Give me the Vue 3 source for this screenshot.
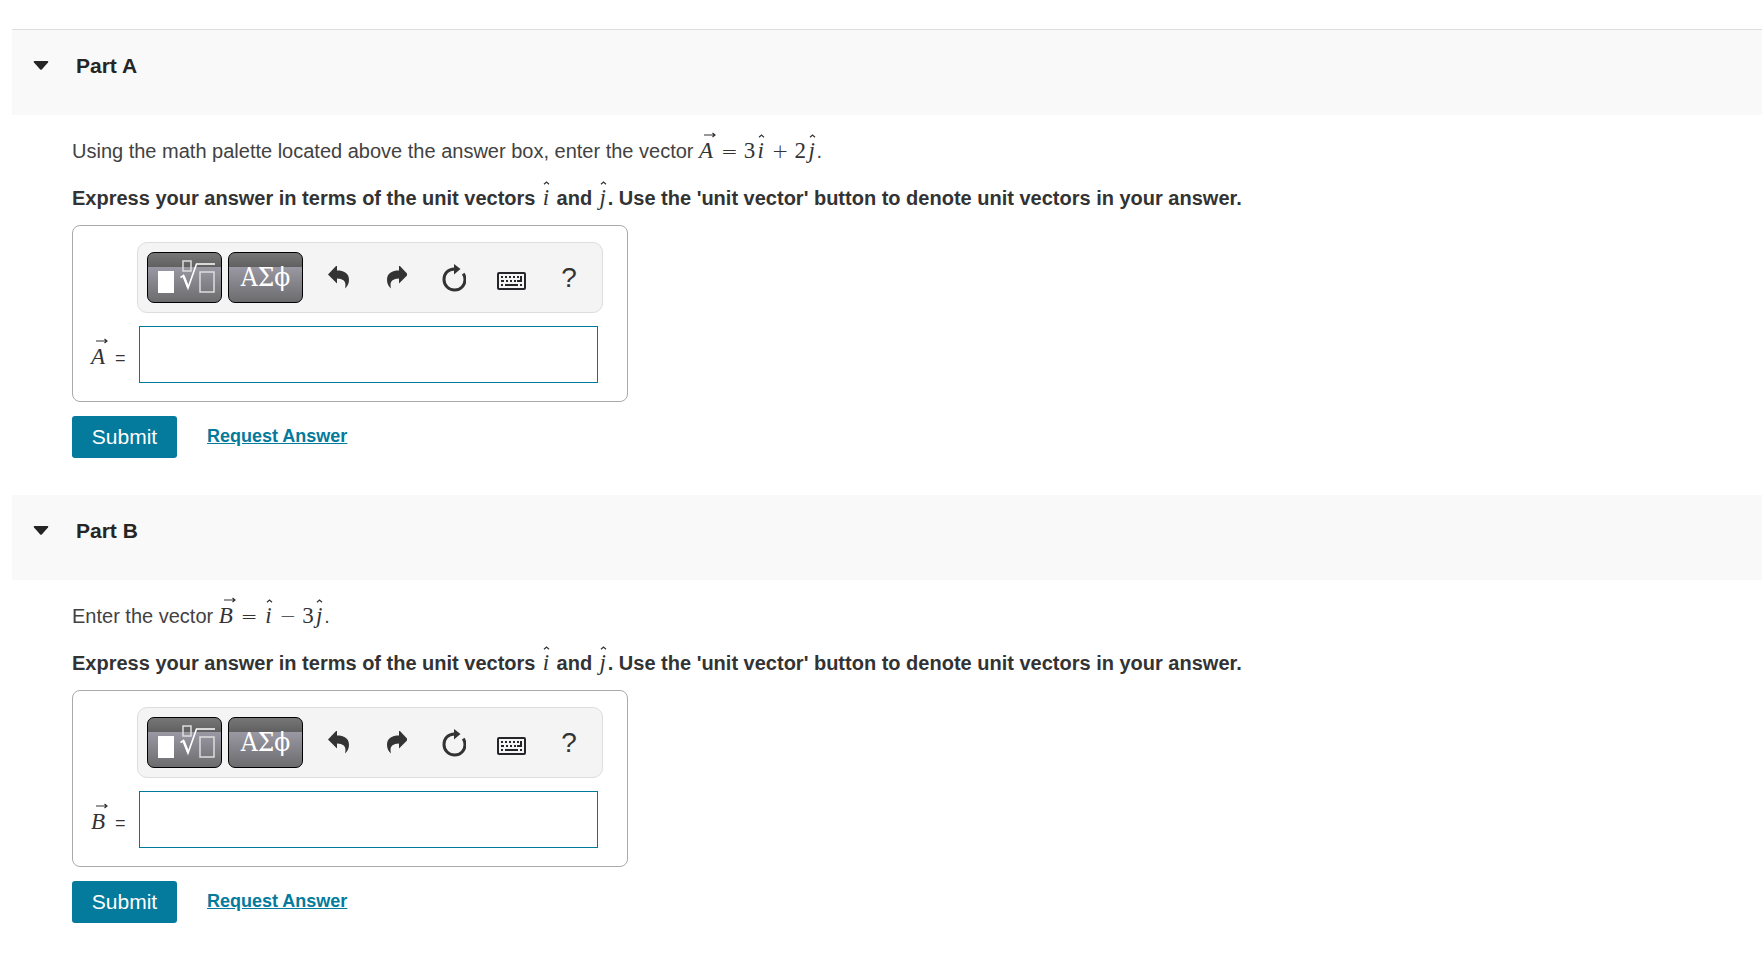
<template>
  <main class="assignment">
    <section v-for="part in parts" :key="part.id" class="part">
      <header class="part-header">
        <button class="part-toggle" type="button" :aria-label="'Toggle Part ' + part.id">
          <svg width="16" height="10" viewBox="0 0 16 10">
            <path d="M1.5 0H14.5Q16 .2 15 1.4L9 8.3Q8 9.4 7 8.3L1 1.4Q0 .2 1.5 0Z" fill="#252525" />
          </svg>
        </button>
        <h2 class="part-title">Part {{ part.id }}</h2>
      </header>

      <div class="part-body">
        <p class="prompt">
          {{ part.prompt }}
          <span class="math">
            <template v-for="(t, i) in part.formula" :key="i">
              <span :class="t.kind">{{ t.text }}<svg v-if="t.kind === 'vec'" class="accent" width="12" height="6" viewBox="0 0 12 6"><path d="M0 3H10.5M8.5 1L11 3L8.5 5" /></svg><svg v-if="t.kind === 'hat'" class="accent" width="7" height="4" viewBox="0 0 7 4"><path d="M1 3.3L3.5 1L6 3.3" /></svg></span>
            </template>
          </span>.
        </p>
        <p class="prompt instruction">
          Express your answer in terms of the unit vectors
          <span class="math"><span class="hat">i<svg class="accent" width="7" height="4" viewBox="0 0 7 4"><path d="M1 3.3L3.5 1L6 3.3" /></svg></span></span>
          and
          <span class="math"><span class="hat">j<svg class="accent" width="7" height="4" viewBox="0 0 7 4"><path d="M1 3.3L3.5 1L6 3.3" /></svg></span></span>. Use the 'unit vector' button to denote unit vectors in your answer.
        </p>

        <div class="answer-box">
          <div class="toolbar">
            <button class="palette" type="button" aria-label="Templates">
              <svg width="60" height="36" viewBox="0 0 60 36" fill="none">
                <rect x="3" y="12" width="16" height="22" fill="#fff" />
                <rect x="28" y="2" width="8" height="10" stroke="#ddd" stroke-width="1.5" />
                <path d="M25.5 18.5L28.5 16.5L33 29L41.5 5H60" stroke="#fff" stroke-width="1.6" />
                <path d="M28.5 17L33 28" stroke="#fff" stroke-width="2.4" />
                <rect x="45" y="13" width="14" height="20" stroke="#ddd" stroke-width="1.5" />
              </svg>
            </button>
            <button class="palette" type="button">ΑΣϕ</button>
            <div class="tools">
              <button class="tool" type="button" aria-label="Undo">
                <svg width="22" height="24" viewBox="-1 1 22 24" fill="#333">
                  <path d="M0 9.5L9 0V5.5C16 5.5 21 8 21 15C21 18.500 19.500 21.500 17 23.500C18.500 17 16.500 14 9 13.500V18.500Z" />
                </svg>
              </button>
              <button class="tool" type="button" aria-label="Redo">
                <svg width="22" height="24" viewBox="-1 1 22 24" fill="#333">
                  <path d="M22 9.5L13 0V5.5C6 5.5 1 8 1 15C1 18.500 2.500 21.500 5 23.500C3.500 17 5.500 14 13 13.500V18.500Z" />
                </svg>
              </button>
              <button class="tool" type="button" aria-label="Reset">
                <svg width="26" height="28" viewBox="-2 0 26 28" fill="none">
                  <path d="M12.500 5C6 5 2 9.700 2 15.500C2 21.500 6.700 26 12.700 26C18.700 26 23 21.300 23 15.700C23 13.300 22.300 11.300 21.200 9.700" stroke="#333" stroke-width="3" />
                  <path d="M12 0L18.500 5L12 10.500Z" fill="#333" />
                </svg>
              </button>
              <button class="tool low" type="button" aria-label="Keyboard shortcuts">
                <svg width="29" height="18" viewBox="0 0 29 18" fill="none" stroke="#25252a">
                  <rect x="1" y="1" width="27" height="16" rx="1" stroke-width="2" />
                  <path d="M4 5H23" stroke-width="2" stroke-dasharray="2 2" />
                  <path d="M4 9H7M9 9H11M13 9H15M17 9H19M20 9H25" stroke-width="2" />
                  <path d="M24 4V9M4 13H6M8 13H21M23 13H25" stroke-width="2" />
                </svg>
              </button>
              <button class="tool help" type="button">?</button>
            </div>
          </div>
          <label class="answer-label" :for="'answer-' + part.id">
            <span class="math"><span class="vec">{{ part.id }}<svg class="accent" width="12" height="6" viewBox="0 0 12 6"><path d="M0 3H10.5M8.5 1L11 3L8.5 5" /></svg></span></span>
            =
          </label>
          <input :id="'answer-' + part.id" v-model="answers[part.id]" class="answer-input" type="text" />
        </div>

        <div class="actions">
          <button class="submit" type="button">Submit</button>
          <a class="request" href="#">Request Answer</a>
        </div>
      </div>
    </section>
  </main>
</template>

<script setup>
import { reactive } from 'vue';

const answers = reactive({ A: '', B: '' });

const parts = [
  {
    id: 'A',
    prompt: 'Using the math palette located above the answer box, enter the vector',
    formula: [
      { kind: 'vec', text: 'A' },
      { kind: 'op', text: '=' },
      { kind: 'num', text: '3' },
      { kind: 'hat', text: 'i' },
      { kind: 'op', text: '+' },
      { kind: 'num', text: '2' },
      { kind: 'hat', text: 'j' }
    ]
  },
  {
    id: 'B',
    prompt: 'Enter the vector',
    formula: [
      { kind: 'vec', text: 'B' },
      { kind: 'op', text: '=' },
      { kind: 'hat', text: 'i' },
      { kind: 'op', text: '−' },
      { kind: 'num', text: '3' },
      { kind: 'hat', text: 'j' }
    ]
  }
];
</script>

<style>
body {
  margin: 0;
  background: #fff;
}
</style>

<style scoped>
.assignment {
  padding: 29px 0 0 12px;
  font-family: "Liberation Sans", Arial, sans-serif;
  font-size: 20px;
  color: #333;
}

button {
  padding: 0;
  border: 0;
  background: none;
  font-family: inherit;
  color: inherit;
  cursor: pointer;
}

svg {
  display: block;
}

.part-header {
  display: flex;
  align-items: flex-start;
  padding: 25px 21px 38px;
  background: #f9f9f9;
}

.part:first-child .part-header {
  border-top: 1px solid #ddd;
}

.part-toggle {
  display: flex;
  align-items: center;
  width: 43px;
  height: 22px;
}

.part-title {
  margin: 0;
  font-size: 21px;
  line-height: 22px;
  color: #252525;
}

.part-body {
  padding: 13px 20px 37px 60px;
}

.prompt {
  height: 47px;
  margin: 0;
  line-height: 47px;
  color: #424242;
}

.prompt.instruction {
  margin-bottom: 3px;
  font-weight: bold;
  color: #333;
}

.math {
  display: inline-flex;
  align-items: baseline;
  font-family: "Liberation Serif", "Times New Roman", serif;
  font-size: 23px;
  font-weight: normal;
  line-height: 24px;
  color: #333;
}

.vec,
.hat {
  position: relative;
  font-style: italic;
}

.vec {
  min-width: 16px;
}

.hat {
  min-width: 10px;
  text-align: center;
}

.num {
  min-width: 12px;
}

.op {
  margin: 0 6px;
  font-family: "DejaVu Sans Light", "DejaVu Sans", sans-serif;
  font-size: 20px;
  font-weight: 200;
}

.accent {
  position: absolute;
  top: -5px;
  left: 2px;
  fill: none;
  stroke: #333;
  stroke-width: 1.2;
}

.vec .accent {
  top: -7px;
  left: 5px;
}

.answer-box {
  display: grid;
  grid-template-columns: 64px 1fr;
  row-gap: 13px;
  box-sizing: border-box;
  max-width: 556px;
  padding: 16px 24px 18px 0;
  border: 1px solid #aaa;
  border-radius: 8px;
}

.toolbar {
  grid-column: 2;
  display: flex;
  align-items: center;
  gap: 6px;
  box-sizing: border-box;
  height: 71px;
  padding: 0 4px 0 9px;
  border: 1px solid #ddd;
  border-radius: 10px;
  background: #f4f4f4;
}

.palette {
  display: flex;
  justify-content: center;
  align-items: center;
  box-sizing: border-box;
  width: 75px;
  height: 51px;
  padding-bottom: 2px;
  border: 1px solid #000;
  border-radius: 7px;
  background: linear-gradient(#777 0, #606060 14px, #9a98a3 14px, #6c6c6e 100%);
  font-family: "DejaVu Serif Condensed", "DejaVu Serif", serif;
  font-size: 26px;
  color: #fff;
}

.tools {
  display: flex;
  flex: 1;
}

.tool {
  display: flex;
  flex: 1;
  justify-content: center;
  align-items: center;
  height: 51px;
}

.low {
  padding-top: 6px;
}

.help {
  font-size: 28px;
}

.answer-label {
  padding: 18px 0 0 18px;
  font-size: 18px;
  line-height: 28px;
  white-space: nowrap;
}

.answer-label .math {
  margin-right: 3px;
}

.answer-input {
  box-sizing: border-box;
  height: 57px;
  margin: 0 5px 0 2px;
  padding: 0 12px;
  border: 1px solid #007a9c;
  background: #fff;
  font-family: inherit;
  font-size: 20px;
  color: #333;
}

.actions {
  display: flex;
  align-items: center;
  gap: 30px;
  margin-top: 14px;
}

.submit {
  width: 105px;
  height: 42px;
  border-radius: 3px;
  background: #047a9c;
  font-size: 21px;
  color: #fff;
}

.request {
  padding-bottom: 2px;
  font-size: 18px;
  font-weight: bold;
  color: #047a9c;
}
</style>
